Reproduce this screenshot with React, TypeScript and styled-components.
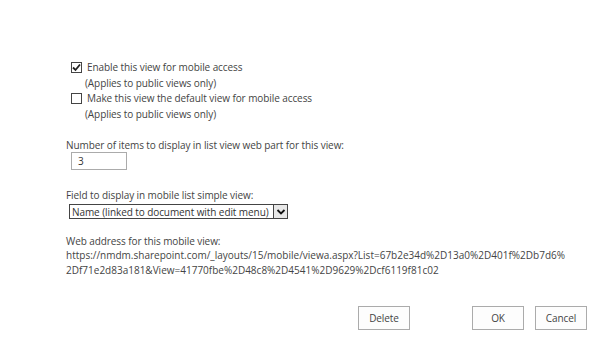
import * as React from 'react'
import styled, { createGlobalStyle } from 'styled-components'

const GlobalStyle = createGlobalStyle`
  html, body {
    margin: 0;
    padding: 0;
    background: #fff;
  }
  body {
    font-family: "Open Sans", "Noto Sans", "Liberation Sans", sans-serif;
    font-size: 10px;
    letter-spacing: -0.08px;
    color: #444;
  }
`

const Page = styled.div`
  width: 600px;
  height: 359px;
  box-sizing: border-box;
  padding: 60px 0 0 66px;
  display: flex;
  flex-direction: column;
`

const CheckGroup = styled.div`
  display: flex;
  flex-direction: column;
  padding-left: 5px;
`

const CheckRow = styled.label`
  display: flex;
  align-items: center;
  gap: 5px;
  line-height: 15.5px;
`

const Box = styled.span`
  width: 11px;
  height: 11px;
  box-sizing: border-box;
  border: 1px solid #444;
  background: #fff;
  display: flex;
  align-items: center;
  justify-content: center;
`

const Note = styled.div`
  padding-left: 14px;
  line-height: 15.5px;
`

const Section = styled.div<{ $top: number }>`
  margin-top: ${(p) => p.$top}px;
  display: flex;
  flex-direction: column;
  line-height: 14px;
`

const TextInput = styled.div`
  margin: 0 0 0 5px;
  width: 56px;
  height: 18px;
  box-sizing: border-box;
  border: 1px solid #ababab;
  padding: 0 6px;
  display: flex;
  align-items: center;
  color: #333;
`

const Select = styled.div`
  margin: 2px 0 0 3px;
  width: 219px;
  height: 15px;
  box-sizing: border-box;
  border: 1px solid #444;
  display: flex;
  align-items: center;
  color: #333;
`

const SelectText = styled.span`
  flex: 1;
  padding-left: 2px;
  white-space: nowrap;
  overflow: hidden;
`

const Arrow = styled.span`
  width: 14px;
  height: 13px;
  box-sizing: border-box;
  border-left: 1px solid #444;
  background: #e8e8e8;
  display: flex;
  align-items: center;
  justify-content: center;
`

const UrlLine = styled.div`
  white-space: nowrap;
  line-height: 15px;
  letter-spacing: 0;
`

const Buttons = styled.div`
  margin-top: 28px;
  display: flex;
  padding-left: 292px;
`

const Button = styled.button<{ $gap?: number }>`
  margin-left: ${(p) => p.$gap ?? 0}px;
  min-width: 52px;
  height: 24px;
  box-sizing: border-box;
  border: 1px solid #ababab;
  background: #fdfdfd;
  font-family: inherit;
  font-size: 10px;
  letter-spacing: -0.08px;
  color: #444;
  padding: 0 8px;
`

export default function App() {
  return (
    <>
      <GlobalStyle />
      <Page>
        <CheckGroup>
          <CheckRow>
            <Box>
              <svg width="9" height="9" viewBox="0 0 9 9">
                <path d="M1 4.5 L3.5 7 L8 1.5" fill="none" stroke="#222" strokeWidth="1.8" />
              </svg>
            </Box>
            Enable this view for mobile access
          </CheckRow>
          <Note>(Applies to public views only)</Note>
          <CheckRow>
            <Box />
            Make this view the default view for mobile access
          </CheckRow>
          <Note>(Applies to public views only)</Note>
        </CheckGroup>

        <Section $top={16}>
          <div>Number of items to display in list view web part for this view:</div>
          <TextInput>3</TextInput>
        </Section>

        <Section $top={18}>
          <div>Field to display in mobile list simple view:</div>
          <Select>
            <SelectText>Name (linked to document with edit menu)</SelectText>
            <Arrow>
              <svg width="10" height="8" viewBox="0 0 10 8">
                <path d="M1.5 2 L5 5.5 L8.5 2" fill="none" stroke="#111" strokeWidth="1.8" />
              </svg>
            </Arrow>
          </Select>
        </Section>

        <Section $top={15}>
          <div>Web address for this mobile view:</div>
          <UrlLine>https://nmdm.sharepoint.com/_layouts/15/mobile/viewa.aspx?List=67b2e34d%2D13a0%2D401f%2Db7d6%</UrlLine>
          <UrlLine>2Df71e2d83a181&amp;View=41770fbe%2D48c8%2D4541%2D9629%2Dcf6119f81c02</UrlLine>
        </Section>

        <Buttons>
          <Button>Delete</Button>
          <Button $gap={62}>OK</Button>
          <Button $gap={11}>Cancel</Button>
        </Buttons>
      </Page>
    </>
  )
}
